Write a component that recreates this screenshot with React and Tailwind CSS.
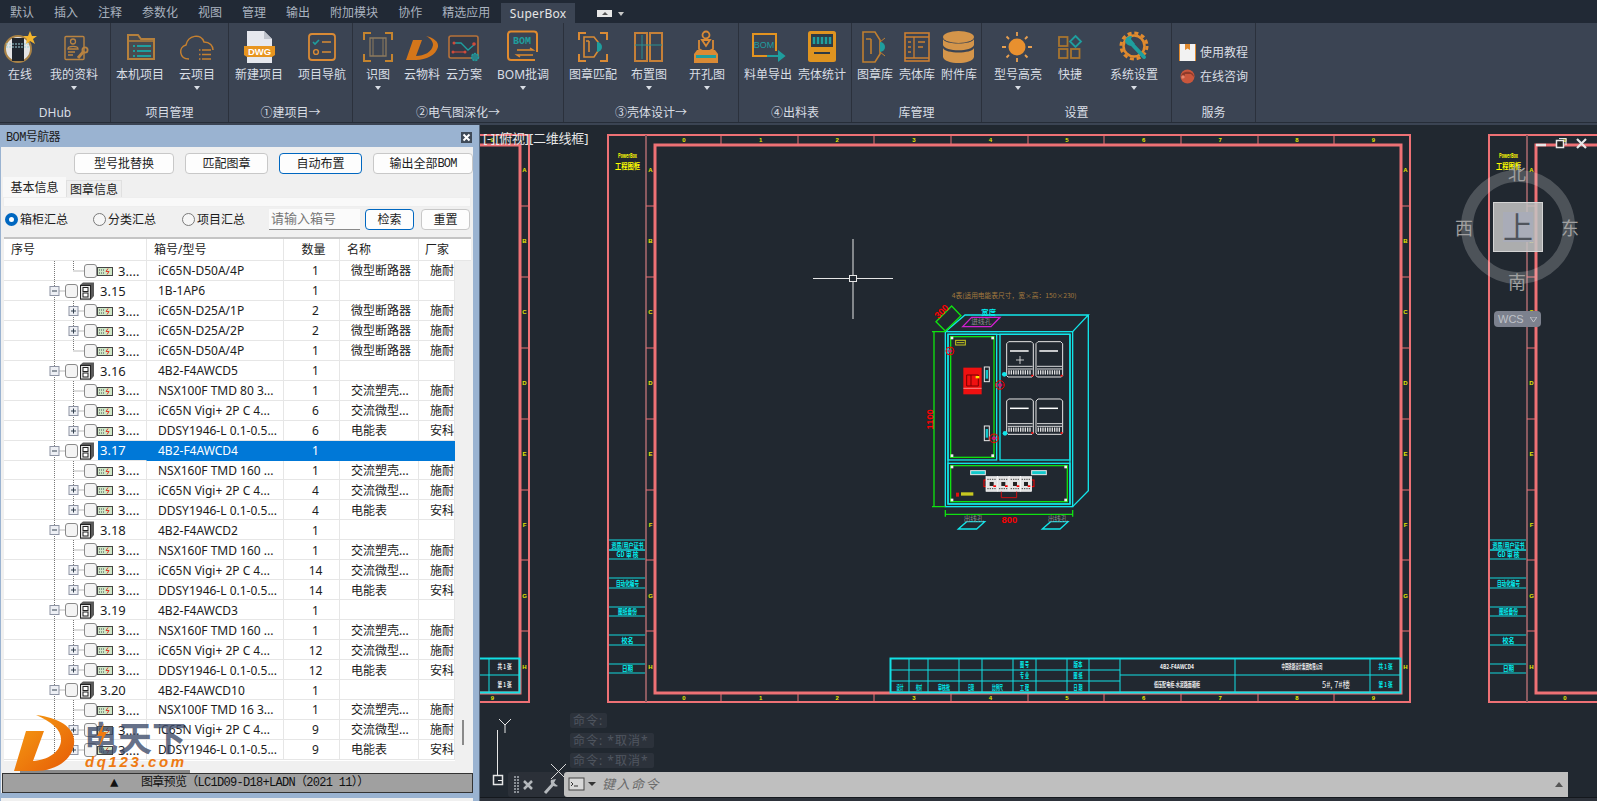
import React from "react";

const O = "#d98a35";
const T = "#1f9e9e";

const Ic = ({ children }) => (
  <svg width="40" height="36" viewBox="0 0 40 36" fill="none" className="block">{children}</svg>
);

const Brackets = ({ c = "#d98a35" }) => (
  <g stroke={c} strokeWidth="2">
    <path d="M13 3H6V10" /><path d="M27 3H34V10" /><path d="M6 24V31H13" /><path d="M34 24V31H27" />
  </g>
);

const icons = {
  online: (
    <Ic>
      <circle cx="18" cy="19" r="13" fill="#e4e4e4" stroke="#a98245" strokeWidth="2" />
      <path d="M12 8H24V31H12Z" fill="#20262e" />
      <path d="M6 14H30M6 17H30" stroke="#9fd0d8" strokeWidth="1" strokeDasharray="2 1" />
      <path d="M30 1L32 6L37 6L33 9L35 14L30 11L26 14L27 9L23 6L28 6Z" fill="#f3b52c" />
    </Ic>
  ),
  profile: (
    <Ic>
      <rect x="11" y="6.5" width="19" height="23" rx="1" stroke="#b98340" strokeWidth="1.4" />
      <circle cx="19" cy="11.5" r="2.5" stroke="#b98340" strokeWidth="1.3" />
      <path d="M14 19C14 15.5 24 15.5 24 19Z" stroke="#b98340" strokeWidth="1.3" />
      <path d="M14 22H21M14 25H19" stroke="#b98340" strokeWidth="1.3" />
      <path d="M24 28L30 21" stroke="#b98340" strokeWidth="3" />
      <circle cx="31" cy="20" r="2.6" stroke="#b98340" strokeWidth="1.8" />
    </Ic>
  ),
  folder: (
    <Ic>
      <path d="M8 29V5H18L21 9H34V29Z" fill="#4a4b4f" stroke="#b5803c" strokeWidth="2" />
      <path d="M8 11H34" stroke="#b5803c" strokeWidth="1.5" />
      <path d="M13 16H31M13 21H31M13 26H31" stroke={T} strokeWidth="2" strokeDasharray="2 2 14 0" />
    </Ic>
  ),
  cloud: (
    <Ic>
      <path d="M12 29C2 29 1 17 9 15C11 5 24 3 27 12C33 12 36 16 36 20" stroke="#c58030" strokeWidth="1.5" />
      <path d="M22 20H34M22 24.5H34M22 29H34" stroke="#c58030" strokeWidth="1.3" strokeDasharray="1.5 1.5 9 0" />
    </Ic>
  ),
  dwg: (
    <Ic>
      <path d="M8 1H25L33 9V33H8Z" fill="#e6e8ee" />
      <path d="M25 1L33 9H25Z" fill="#bfc3cc" />
      <path d="M5 16H36V25L33 27H8L5 25Z" fill="#e8951f" />
      <text x="20.5" y="24.5" textAnchor="middle" fontSize="9.5" fontWeight="700" fill="#fff" fontFamily="Liberation Sans">DWG</text>
    </Ic>
  ),
  nav: (
    <Ic>
      <rect x="7" y="4" width="26" height="26" rx="3" stroke={O} strokeWidth="1.8" />
      <path d="M11 12L13 14L17 10" stroke={T} strokeWidth="1.6" />
      <path d="M20 12H29M20 22H29" stroke={O} strokeWidth="1.6" />
      <circle cx="14" cy="22" r="2.4" stroke={O} strokeWidth="1.4" />
    </Ic>
  ),
  recog: (
    <Ic>
      <Brackets c="#c4842f" />
      <path d="M12 8H28V26H12Z" stroke="#8d7a5e" strokeWidth="1.3" />
      <path d="M15 8V26M25 8V26" stroke="#8d7a5e" strokeWidth="1" />
    </Ic>
  ),
  wuliao: (
    <Ic>
      <path d="M4 30L11 10L20 10L14 26C22 26 30 22 31 15C31 11 28 8 24 6C32 8 37 12 36 17C34 25 24 30 14 30Z" fill="#d4761a" />
    </Ic>
  ),
  scheme: (
    <Ic>
      <rect x="5" y="6" width="29" height="22" rx="2" fill="#333a48" stroke="#b5713a" strokeWidth="1.6" />
      <path d="M9 13H17L24 20L31 14" stroke={T} strokeWidth="1.3" />
      <path d="M9 22H21" stroke="#c64a3a" strokeWidth="1.2" />
      <circle cx="10" cy="13" r="1.5" fill="#d04a3a" /><circle cx="30" cy="14" r="1.8" fill="#d04a3a" />
      <circle cx="9" cy="22" r="1.5" fill="#d04a3a" /><circle cx="21" cy="22" r="1.5" fill="#d04a3a" />
      <circle cx="31" cy="27" r="3.5" fill="#2a7f86" stroke="#1f9e9e" strokeWidth="1.5" strokeDasharray="2 1" />
    </Ic>
  ),
  bom: (
    <Ic>
      <path d="M32 30H8A3 3 0 0 1 5 27V4A3 3 0 0 1 8 1.5H31A3 3 0 0 1 34 4V22" stroke="#e08a2e" strokeWidth="2" />
      <text x="19" y="14" textAnchor="middle" fontSize="10" fontWeight="700" fill={T} fontFamily="Liberation Mono">BOM</text>
      <path d="M14 20H30L27 18M30 25H14L17 27" stroke="#e08a2e" strokeWidth="1.5" />
    </Ic>
  ),
  match: (
    <Ic>
      <Brackets />
      <path d="M11 7H21L25 12V21L21 27H11Z" stroke={O} strokeWidth="1.6" />
      <path d="M16 11V22M16 11H13" stroke={O} strokeWidth="1.6" />
      <path d="M24 12A5 5 0 0 1 24 22Z" fill={T} />
    </Ic>
  ),
  layout: (
    <Ic>
      <rect x="6" y="3" width="12" height="28" stroke="#c58038" strokeWidth="2" />
      <rect x="21" y="3" width="12" height="28" stroke="#c58038" strokeWidth="2" />
      <path d="M6 15H33M13 5V29" stroke="#2a8f90" strokeWidth="1" />
    </Ic>
  ),
  hole: (
    <Ic>
      <circle cx="19" cy="5" r="3.5" stroke={O} strokeWidth="1.8" />
      <path d="M12 10V19L19 23L26 19V10M15 10L19 16L23 10Z" stroke={O} strokeWidth="1.8" />
      <path d="M10 20H28L31 24V33H7V24Z" fill={O} />
      <path d="M9 25H29V28H9Z" fill={T} />
    </Ic>
  ),
  bomout: (
    <Ic>
      <path d="M28 21V4H5V26H21" stroke="#e29320" strokeWidth="2" />
      <text x="16" y="18" textAnchor="middle" fontSize="9" fill={T} fontFamily="Liberation Sans">BOM</text>
      <path d="M19 26H31V22L36 26L31 30V26" fill={T} stroke={T} strokeWidth="2" />
    </Ic>
  ),
  stats: (
    <Ic>
      <rect x="6" y="1" width="28" height="31" rx="2.5" fill="#df9420" />
      <rect x="9" y="4" width="22" height="13" fill="#2e3a44" />
      <path d="M12 7V14M16 7V14M20 7V14M24 7V14M28 7V14" stroke={T} strokeWidth="2.5" />
      <path d="M12 23H28" stroke="#2e3a44" strokeWidth="2" />
    </Ic>
  ),
  stamp: (
    <Ic>
      <path d="M8 2H20L25 10V24L20 32H8Z" stroke="#c07f30" strokeWidth="1.6" />
      <path d="M16 9V24M16 9H11" stroke="#c07f30" strokeWidth="1.6" />
      <path d="M25 12A5 5 0 0 1 25 22Z" fill={T} />
      <path d="M25 12L30 8M25 22L30 26" stroke="#c07f30" strokeWidth="1" />
    </Ic>
  ),
  shell: (
    <Ic>
      <rect x="8" y="3" width="24" height="28" stroke="#cb7f32" strokeWidth="1.6" />
      <path d="M8 7H32M8 28H32M17 7V28" stroke="#cb7f32" strokeWidth="1.3" />
      <path d="M11 12H14M11 17H14M11 22H14M21 12H28M21 17H26" stroke="#cb7f32" strokeWidth="1.5" />
    </Ic>
  ),
  db: (
    <Ic>
      <ellipse cx="19.5" cy="7" rx="15.5" ry="6" fill="#d4954a" />
      <path d="M4 9C6 15 33 15 35 9V15C33 22 6 22 4 15Z" fill="#d4954a" />
      <path d="M4 18C6 24 33 24 35 18V27C33 35 6 35 4 27Z" fill="#d4954a" />
    </Ic>
  ),
  sun: (
    <Ic>
      <circle cx="19" cy="17" r="8.5" fill="#e8902f" />
      <path d="M19 2V6M19 28V32M4 17H8M30 17H34M8.5 6.5L11 9M27 25L29.5 27.5M29.5 6.5L27 9M11 25L8.5 27.5" stroke="#e8a050" strokeWidth="1.8" />
    </Ic>
  ),
  quick: (
    <Ic>
      <rect x="9" y="7" width="8.5" height="9" stroke="#a8752f" strokeWidth="1.8" />
      <rect x="9" y="19" width="8.5" height="9" stroke="#a8752f" strokeWidth="1.8" />
      <rect x="21" y="19" width="8.5" height="9" stroke="#a8752f" strokeWidth="1.8" />
      <path d="M25.5 6L31 11.5L25.5 17L20 11.5Z" stroke={T} strokeWidth="1.8" />
    </Ic>
  ),
  gear: (
    <Ic>
      <circle cx="20" cy="16" r="13" stroke="#e08a2e" strokeWidth="3" strokeDasharray="4 2.8" />
      <circle cx="20" cy="16" r="10.5" stroke="#e08a2e" strokeWidth="2.5" />
      <path d="M15 11L30 27" stroke={T} strokeWidth="4" strokeLinecap="round" />
      <path d="M11 11A6 6 0 0 0 21 14L17 9L18 6A6 6 0 0 0 11 11Z" fill={T} />
    </Ic>
  ),
};

const groups = [
  { w: 111, label: "DHub", items: [["在线", 40, "online"], ["我的资料", 68, "profile", 1]] },
  { w: 118, label: "项目管理", items: [["本机项目", 58, "folder"], ["云项目", 56, "cloud", 1]] },
  { w: 124, label: "①建项目→", items: [["新建项目", 60, "dwg"], "sep", ["项目导航", 60, "nav"]] },
  { w: 211, label: "②电气图深化→", items: [["识图", 50, "recog", 1], ["云物料", 38, "wuliao"], ["云方案", 46, "scheme"], ["BOM批调", 72, "bom", 1]] },
  { w: 175, label: "③壳体设计→", items: [["图章匹配", 58, "match"], ["布置图", 54, "layout", 1], ["开孔图", 62, "hole", 1]] },
  { w: 113, label: "④出料表", items: [["料单导出", 58, "bomout"], ["壳体统计", 50, "stats"]] },
  { w: 130, label: "库管理", items: [["图章库", 46, "stamp"], ["壳体库", 38, "shell"], ["附件库", 46, "db"]] },
  { w: 190, label: "设置", items: [["型号高亮", 72, "sun", 1], ["快捷", 32, "quick"], "sep2", ["系统设置", 74, "gear", 1]] },
];

const tabs = ["默认", "插入", "注释", "参数化", "视图", "管理", "输出", "附加模块", "协作", "精选应用"];

const Ribbon = () => (
  <div className="flex h-[100px] bg-[#3b4453] border-b border-[#262d38] text-[#d9dee5] text-[12px]">
    {groups.map((g) => (
      <div key={g.label} style={{ width: g.w }} className="shrink-0 h-full flex flex-col border-r border-[#2b313c]">
        <div className="h-[80px] flex">
          {g.items.map((it, i) =>
            typeof it === "string" ? (
              <div key={i} className={it === "sep" ? "w-[1px] ml-[1px] mr-[2px] mt-[5px] h-[72px] bg-[#2b313c]" : "w-[1px] ml-[8px] mr-[3px] mt-[5px] h-[72px] bg-[#2b313c]"} />
            ) : (
              <div key={it[0]} style={{ width: it[1] }} className="shrink-0 flex flex-col items-center pt-[7px]">
                {icons[it[2]]}
                <div className="h-[18px] leading-[18px] whitespace-nowrap">{it[0]}</div>
                {it[3] ? <div className="mt-[2px] w-0 h-0 border-x-[3px] border-x-transparent border-t-[4px] border-t-[#d9dee5]" /> : null}
              </div>
            )
          )}
        </div>
        <div className="h-[19px] leading-[19px] text-center whitespace-nowrap">{g.label}</div>
      </div>
    ))}
    <div className="border-r border-[#2b313c] w-[84px] h-full flex flex-col">
      <div className="h-[80px] pt-[21px] pl-[7px] flex flex-col gap-[7px]">
        <div className="flex items-center gap-[4px] h-[17px]">
          <svg width="17" height="17" viewBox="0 0 17 17">
            <rect x="0" y="0" width="17" height="17" fill="#f2f2f2" />
            <path d="M0 0V17M17 0V17" stroke="#e08a2e" strokeWidth="2" />
            <path d="M6 0H11V6L8.500 4.500L6 6Z" fill="#e08a2e" />
          </svg>
          <span className="whitespace-nowrap">使用教程</span>
        </div>
        <div className="flex items-center gap-[4px] h-[17px]">
          <svg width="17" height="17" viewBox="0 0 17 17">
            <circle cx="8.500" cy="8.500" r="7" fill="#c9563c" />
            <path d="M2 9C2 2 15 2 15 9L12 6H6L5 11Z" fill="#8e3a2a" />
            <circle cx="4" cy="9" r="1.800" fill="#e8836a" />
          </svg>
          <span className="whitespace-nowrap">在线咨询</span>
        </div>
      </div>
      <div className="h-[19px] leading-[19px] text-center">服务</div>
    </div>
  </div>
);

/* ---------------- tree table ---------------- */
const N160 = "NSX160F TMD 160 ...";
const V = "iC65N Vigi+ 2P C 4...";
const D = "DDSY1946-L 0.1-0.5...";
const S = "施耐";
const rows = [
  ["c", "3....", "iC65N-D50A/4P", "1", "微型断路器", S, 0, 1],
  ["p", "3.15", "1B-1AP6", "1"],
  ["c", "3....", "iC65N-D25A/1P", "2", "微型断路器", S, 1],
  ["c", "3....", "iC65N-D25A/2P", "2", "微型断路器", S, 1],
  ["c", "3....", "iC65N-D50A/4P", "1", "微型断路器", S, 0, 1],
  ["p", "3.16", "4B2-F4AWCD5", "1"],
  ["c", "3....", "NSX100F TMD 80 3...", "1", "交流塑壳...", S, 0],
  ["c", "3....", V, "6", "交流微型...", S, 1],
  ["c", "3....", D, "6", "电能表", "安科", 1, 1],
  ["p", "3.17", "4B2-F4AWCD4", "1", "", "", 0, 0, 1],
  ["c", "3....", N160, "1", "交流塑壳...", S, 0],
  ["c", "3....", V, "4", "交流微型...", S, 1],
  ["c", "3....", D, "4", "电能表", "安科", 1, 1],
  ["p", "3.18", "4B2-F4AWCD2", "1"],
  ["c", "3....", N160, "1", "交流塑壳...", S, 0],
  ["c", "3....", V, "14", "交流微型...", S, 1],
  ["c", "3....", D, "14", "电能表", "安科", 1, 1],
  ["p", "3.19", "4B2-F4AWCD3", "1"],
  ["c", "3....", N160, "1", "交流塑壳...", S, 0],
  ["c", "3....", V, "12", "交流微型...", S, 1],
  ["c", "3....", D, "12", "电能表", "安科", 1, 1],
  ["p", "3.20", "4B2-F4AWCD10", "1"],
  ["c", "3....", "NSX100F TMD 16 3...", "1", "交流塑壳...", S, 0],
  ["c", "3....", V, "9", "交流微型...", S, 1],
  ["c", "3....", D, "9", "电能表", "安科", 1, 1],
];

const Exp = ({ x, minus }) => (
  <g>
    <rect x={x - 4.5} y="5.500" width="9" height="9" fill="#eef0f5" stroke="#8d93a3" />
    <path d={`M${x - 2.5} 10H${x + 2.5}`} stroke="#33404f" />
    {minus ? null : <path d={`M${x} 7.500V12.500`} stroke="#33404f" />}
  </g>
);

const TreeC = ({ r }) => {
  const dot = { stroke: "#777", strokeDasharray: "1 1" };
  if (r[0] === "p") {
    return (
      <svg width="94" height="20" className="shrink-0 block">
        <path d="M50.500 0V20" {...dot} />
        <path d="M50.500 10H61" {...dot} />
        <Exp x={50.5} minus />
        <rect x="61.500" y="3.500" width="12" height="13" rx="2.500" fill="#f4f4f4" stroke="#8a8a8a" />
        <path d="M76 4L79 1.500H90V15L87 18.500H76Z" fill="#5a5a5a" />
        <rect x="76.500" y="4.500" width="10" height="13.500" fill="#e8e8e8" stroke="#222" />
        <rect x="79" y="6.500" width="5" height="4" fill="#fff" stroke="#222" />
        <rect x="79" y="12" width="5" height="4" fill="#fff" stroke="#222" />
      </svg>
    );
  }
  return (
    <svg width="110" height="20" className="shrink-0 block">
      <path d="M50.500 0V20" {...dot} />
      <path d={r[7] ? "M69.500 0V10" : "M69.500 0V20"} {...dot} />
      <path d="M69.500 10H80" {...dot} />
      {r[6] ? <Exp x={69.5} /> : null}
      <rect x="80.500" y="3.500" width="12" height="13" rx="2.500" fill="#f4f4f4" stroke="#8a8a8a" />
      <rect x="93.500" y="6.500" width="15" height="8" fill="#cfe8c6" stroke="#444" />
      <path d="M95 9H100M95 12H100" stroke="#445" strokeDasharray="1 1" />
      <path d="M104 7.500L102 10.500H105L103 13.500" stroke="#e23b2a" fill="none" />
    </svg>
  );
};

const cols = "grid grid-cols-[143px_137px_56px_79px_36px]";

const Row = ({ r }) => {
  const sel = r[8];
  const cell = `h-full flex items-center pt-[2px] overflow-hidden whitespace-nowrap border-b border-r ${sel ? "bg-[#0078d7] text-white border-[#0078d7]" : "border-[#e6e6e6]"}`;
  return (
    <div className={`${cols} h-[19.96px]`}>
      <div className={`h-full flex border-b border-r overflow-hidden ${sel ? "border-b-[#e6e6e6] border-r-[#0078d7]" : "border-[#e6e6e6]"}`}>
        <TreeC r={r} />
        <div className={`flex-1 flex items-center pt-[2px] whitespace-nowrap h-full text-[13px] ${r[0] === "p" ? "pl-[2px]" : "pl-[4px]"} ${sel ? "bg-[#0078d7] text-white" : ""}`}>
          {r[1]}
        </div>
      </div>
      <div className={`${cell} pl-[11px]`}>{r[2]}</div>
      <div className={`${cell} justify-center pl-[8px]`}>{r[3]}</div>
      <div className={`${cell} pl-[11px]`}>{r[4] || ""}</div>
      <div className={`${cell} pl-[11px]`}>{r[5] || ""}</div>
    </div>
  );
};

const Btn = ({ w, blue, children, cls = "" }) => (
  <div style={{ width: w }} className={`shrink-0 h-[21px] flex items-center justify-center bg-[#fdfdfd] rounded-[4px] border whitespace-nowrap ${blue ? "border-[#0067c0]" : "border-[#c8c8c8]"} ${cls}`}>
    {children}
  </div>
);

const Radio = ({ w, on, children }) => (
  <div style={{ width: w }} className="shrink-0 h-[21px] flex items-center gap-[2px]">
    {on ? (
      <div className="w-[13px] h-[13px] rounded-full border-[4px] border-[#0067c0] bg-white" />
    ) : (
      <div className="w-[13px] h-[13px] rounded-full border border-[#7a7a7a] bg-[#f6f6f6]" />
    )}
    <span className="whitespace-nowrap">{children}</span>
  </div>
);

const Panel = () => (
  <div className="relative w-[480px] h-[676px] shrink-0 bg-[#9ab3d1] pt-[2px] pl-[1px] pr-[6px] border-r border-[#55657a] flex flex-col text-[12px] text-[#1c1c1c]">
    <div className="h-[20px] flex items-center justify-between pl-[5px] pr-[1px] shrink-0">
      <span className="translate-y-[1px] font-['Liberation_Mono','Noto_Sans_CJK_SC',monospace] tracking-[-0.6px]">BOM号航器</span>
      <svg width="11" height="11" viewBox="0 0 11 11"><rect width="11" height="11" fill="#3f4a58" /><path d="M2.500 2.500L8.500 8.500M8.500 2.500L2.500 8.500" stroke="#fff" strokeWidth="2" /></svg>
    </div>
    <div className="flex-1 bg-[#f0f0f0] flex flex-col min-h-0">
      <div className="h-[30px] pt-[6px] pl-[73px] flex gap-[11px] shrink-0">
        <Btn w={100}>型号批替换</Btn>
        <Btn w={83}>匹配图章</Btn>
        <Btn w={83} blue>自动布置</Btn>
        <Btn w={100}>输出全部<span className="font-['Liberation_Mono',monospace] tracking-[-0.8px]">BOM</span></Btn>
      </div>
      <div className="h-[20px] flex items-end pl-[2px] shrink-0">
        <div className="h-[20px] w-[63px] pt-[1px] flex items-center justify-center bg-[#f8f8f8]">基本信息</div>
        <div className="h-[17px] w-[56px] pt-[1px] flex items-center justify-center bg-[#eeeeee] border border-b-0 border-[#e0e0e0]">图章信息</div>
      </div>
      <div className="h-[10px] mx-[2px] mr-[2px] bg-[#f9f9f9] border border-[#eeeeee] shrink-0" />
      <div className="h-[30px] pl-[4px] pt-[2px] flex items-start shrink-0">
        <Radio w={88} on>箱柜汇总</Radio>
        <Radio w={89}>分类汇总</Radio>
        <Radio w={87}>项目汇总</Radio>
        <div className="w-[91px] h-[21px] bg-[#fbfbfb] border-b border-[#8a8a8a] text-[13px] text-[#777] pl-[2px] leading-[18px] whitespace-nowrap">请输入箱号</div>
        <Btn w={49} blue cls="ml-[5px]">检索</Btn>
        <Btn w={49} cls="ml-[7px]">重置</Btn>
      </div>
      <div className="ml-[3px] w-[467px] h-[536px] shrink-0 border-t-2 border-[#c4c4c4] bg-white relative">
        <div className="grid grid-cols-[143px_137px_56px_79px_52px] h-[22px] border-b border-[#e6e6e6]">
          <div className="pl-[7px] flex items-center border-r border-[#e6e6e6]">序号</div>
          <div className="pl-[7px] flex items-center border-r border-[#e6e6e6]">箱号/型号</div>
          <div className="flex items-center justify-center pl-[4px] border-r border-[#e6e6e6]">数量</div>
          <div className="pl-[7px] flex items-center border-r border-[#e6e6e6]">名称</div>
          <div className="pl-[6px] flex items-center">厂家</div>
        </div>
        <div className="flex h-[500px]">
          <div className="w-[451px] shrink-0">
            {rows.map((r, i) => <Row key={i} r={r} />)}
          </div>
          <div className="flex-1 bg-[#f0f0f0] relative">
            <div className="absolute left-[7px] top-[459px] w-[2px] h-[25px] bg-[#8a8a8a]" />
          </div>
        </div>
        <div className="h-[12px] bg-[#f0f0f0] relative">
          <div className="absolute left-[16px] top-[9px] w-[170px] h-[3px] bg-[#8a8a8a]" />
        </div>
      </div>
      <div className="ml-[1px] w-[471px] h-[20px] shrink-0 bg-[#a0a0a0] border border-[#333] flex items-center font-['Liberation_Mono','Noto_Sans_CJK_SC',monospace] text-[#111] whitespace-nowrap">
        <span className="ml-[107px] w-[31px] text-[14px]">▲</span>
        <span className="tracking-[-0.7px]">图章预览（LC1D09-D18+LADN（2021 11））</span>
      </div>
      <div className="h-[5px] bg-[#9ab3d1] shrink-0" />
    </div>
    {/* site watermark */}
    <div className="absolute left-0 top-[587px] w-[200px] h-[75px]">
      <svg width="200" height="75" viewBox="0 712 200 75" className="absolute left-0 top-0">
        <defs>
          <linearGradient id="wm" x1="0" y1="0" x2="1" y2="1">
            <stop offset="0" stopColor="#f6a014" />
            <stop offset="1" stopColor="#e65a06" />
          </linearGradient>
        </defs>
        <path d="M14 771L26 731H44L33 761C48 760 60 752 61 741C62 730 52 722 36 715C60 718 76 728 74 744C72 760 56 771 35 771Z" fill="url(#wm)" />
      </svg>
      <div className="absolute left-[84px] top-[6px] text-[34px] leading-[38px] font-bold text-[#3c4a68]/80 whitespace-nowrap font-['Noto_Sans_CJK_SC',sans-serif]">电天下</div>
      <svg width="14" height="24" viewBox="0 0 14 24" className="absolute left-[95px] top-[11px]"><path d="M9 0L2 13H7L4 24L12 9H7Z" fill="#f07a10" /></svg>
      <div className="absolute left-[85px] top-[41px] text-[15px] leading-[17px] font-bold italic tracking-[2.6px] text-[#ee7a12] whitespace-nowrap font-['Liberation_Sans',sans-serif]">dq123.com</div>
    </div>
  </div>
);

/* ---------------- CAD drawing ---------------- */
const PK = "#ee7175";
const sheetTicksX = [721, 798, 874, 951, 1028, 1104, 1181, 1258, 1334];
const sheetTicksY = [206, 277, 348, 419, 490, 560, 631];
const letters = ["A", "B", "C", "D", "E", "F", "G", "H"];
const inView = (x) => x > 484 && x < 1592;

const Sheet = ({ dx }) => (
  <g transform={`translate(${dx} 0)`}>
    <rect x="608" y="135" width="802" height="567" stroke={PK} strokeWidth="2" fill="none" />
    <path d="M646 135V702" stroke="#8b5a5f" strokeWidth="2" />
    <rect x="655" y="145" width="746" height="548" stroke={PK} strokeWidth="3" fill="none" />
    {sheetTicksX.map((x) => <path key={x} d={`M${x} 135V144M${x} 693V702`} stroke={PK} strokeWidth="1" />)}
    {sheetTicksY.map((y) => <path key={y} d={`M646 ${y}H655M1401 ${y}H1410`} stroke={PK} strokeWidth="1" />)}
    {letters.map((l, i) => (
      <g key={l} fontSize="6" fill="#e6e600" fontWeight="700" fontFamily="Liberation Sans" textAnchor="middle">
        {inView(650.5 + dx) ? <text x="650.5" y={172 + i * 71}>{l}</text> : null}
        {inView(1405.5 + dx) ? <text x="1405.5" y={172 + i * 71}>{l}</text> : null}
      </g>
    ))}
    {[0, 1, 2, 3, 4, 5, 6, 7, 8, 9].map((n) =>
      inView(684 + n * 76.6 + dx) ? (
        <g key={n} fontSize="6" fill="#e6e600" fontWeight="700" fontFamily="Liberation Sans" textAnchor="middle">
          <text x={684 + n * 76.6} y="141.500">{n}</text>
          <text x={684 + n * 76.6} y="700">{n}</text>
        </g>
      ) : null
    )}
  </g>
);

const Fit = ({ x, y, w, s = 6.5, c = "#00f0f0", b = true, children }) => (
  <text x={x} y={y} textAnchor="middle" textLength={w} lengthAdjust="spacingAndGlyphs" fontSize={s} fontWeight={b ? 700 : 400} fill={c} fontFamily="Noto Sans CJK SC">{children}</text>
);

const StripRow = ({ y1, y2, w, t }) => (
  <>
    <path d={`M609 ${y1}H645M609 ${y2}H645`} stroke="#12d8dc" strokeWidth="1" />
    <Fit x={627.5} y={(y1 + y2) / 2 + 2.5} w={w} s={7}>{t}</Fit>
  </>
);

const LeftStrip = ({ dx }) => (
  <g transform={`translate(${dx} 0)`}>
    <Fit x={627.5} y={158} w={19} s={6} c="#ffff00">PowerBox</Fit>
    <Fit x={627.5} y={169} w={25} s={7.5} c="#ffff00">工程图框</Fit>
    <StripRow y1={540} y2={550} w={32} t="资质/用户证书" />
    <StripRow y1={550} y2={559} w={22} t="GD 审 核" />
    <StripRow y1={578} y2={588} w={23} t="自动化编号" />
    <StripRow y1={607} y2={616} w={19} t="图纸备份" />
    <StripRow y1={635} y2={645} w={12} t="校名" />
    <StripRow y1={664} y2={673} w={11} t="日期" />
  </g>
);

const C = "#12e0e4";
const TitleBlock = () => {
  const vs = [909, 928, 959, 982, 1013, 1036, 1067, 1089];
  const W = "#f0f0f0";
  return (
    <g>
      <rect x="890.500" y="658.500" width="510" height="34" stroke={C} strokeWidth="2" fill="none" />
      {vs.map((x) => <path key={x} d={`M${x} 658V693`} stroke={C} strokeWidth="1" />)}
      <path d="M1120 658V693M1235 658V693M1370 658V693M890 670H1120M890 681H1120M1120 675H1401" stroke={C} strokeWidth="1" />
      <Fit x={900} y={689.500} w={7}>设计</Fit>
      <Fit x={919} y={689.500} w={6}>校对</Fit>
      <Fit x={944} y={689.500} w={12}>审核批</Fit>
      <Fit x={971} y={689.500} w={6}>日期</Fit>
      <Fit x={997.500} y={689.500} w={11}>比例尺</Fit>
      <Fit x={1024.500} y={666.500} w={9}>图 号</Fit>
      <Fit x={1024.500} y={678} w={9}>专 业</Fit>
      <Fit x={1024.500} y={689.500} w={9}>工 程</Fit>
      <Fit x={1078} y={666.500} w={9}>版本</Fit>
      <Fit x={1078} y={678} w={9}>图 纸</Fit>
      <Fit x={1078} y={689.500} w={9}>日 期</Fit>
      <Fit x={1177} y={669} w={34} c={W}>4B2-F4AWCD4</Fit>
      <Fit x={1177} y={687} w={46} c={W}>低压配电柜-水泥路面箱柜</Fit>
      <Fit x={1302} y={669} w={41} c={W}>中国铁路设计集团有限公司</Fit>
      <Fit x={1336} y={688} w={28} s={9} c={W} b={false}>5#, 7#楼</Fit>
      <Fit x={1385.500} y={669} w={14}>共 1 张</Fit>
      <Fit x={1385.500} y={687} w={14}>第 1 张</Fit>
    </g>
  );
};

const Meter = ({ x, y }) => (
  <g fill="none">
    <path d={`M${x + 6} ${y}H${x + 74}L${x + 80} ${y + 6}V${y + 102}L${x + 76} ${y + 106}H${x + 4}L${x} ${y + 102}V${y + 6}Z`} stroke="#e8e8e8" strokeWidth="3" />
    <path d={`M${x + 10} ${y + 28}H${x + 66}`} stroke="#fff" strokeWidth="4.500" />
    <path d={`M${x + 3} ${y + 74}H${x + 78}M${x + 3} ${y + 82}H${x + 78}`} stroke="#fff" strokeWidth="2.500" />
    <path d={`M${x + 5} ${y + 92}H${x + 75}`} stroke="#e0e0e0" strokeWidth="13" strokeDasharray="4 3" />
    <path d={`M${x + 74} ${y + 102}H${x + 80}`} stroke="#f00" strokeWidth="5" />
  </g>
);

const RedMark = ({ x, y, r }) => (
  <g>
    <circle cx={x} cy={y} r={r} fill="none" stroke="#f00" strokeWidth="3" />
    <circle cx={x} cy={y} r={r * 0.45} fill="#b030c0" />
    <path d={`M${x - r} ${y}H${x + r}M${x} ${y - r}V${y + r}`} stroke="#f00" strokeWidth="1.500" />
  </g>
);

const Cabinet = () => {
  const dots = [[126, 174], [248, 174], [126, 527], [248, 527], [126, 561], [467, 561], [126, 660], [467, 660]];
  return (
    <g transform="translate(910 280) scale(0.3333)">
      <text x="125" y="55" textLength="375" lengthAdjust="spacingAndGlyphs" fontSize="19" fill="#a47a3e" fontFamily="Noto Sans CJK SC">4表(适用电能表尺寸，宽×高：150×230)</text>
      <g stroke="#12e6ea" strokeWidth="4" fill="none">
        <path d="M106 155L165 105H535L488 155M535 105V632L488 680" />
        <rect x="106" y="155" width="382" height="525" />
        <rect x="114" y="163" width="366" height="509" />
        <rect x="114" y="163" width="146" height="377" />
        <rect x="270" y="163" width="210" height="377" />
        <rect x="114" y="550" width="366" height="122" />
        <path d="M145 747L170 725H224L200 747ZM397 747L422 725H474L450 747Z" />
      </g>
      <g stroke="#10e010" strokeWidth="4" fill="none">
        <rect x="122" y="170" width="130" height="362" />
        <rect x="122" y="557" width="350" height="108" />
        <path d="M78 125L125 78L153 107L106 153Z" />
        <path d="M72 155V680M66 155H106M66 680H106M106 703H488M106 690V710M488 690V710" />
      </g>
      {dots.map(([x, y]) => <rect key={`${x}${y}`} x={x - 4} y={y - 4} width="8" height="8" fill="#f0f0f0" />)}
      <path d="M158 140L185 112H270L243 140Z" fill="none" stroke="#d020d0" strokeWidth="4" />
      <text x="214" y="132" textAnchor="middle" fontSize="20" fill="#8c8c8c" fontFamily="Noto Sans CJK SC">进线孔</text>
      <text x="236" y="105" textAnchor="middle" fontSize="22" fontWeight="700" fill="#00f0f0" fontFamily="Noto Sans CJK SC">宽度</text>
      <text x="95" y="104" textAnchor="middle" fontSize="28" fontWeight="700" fill="#f00" fontFamily="Liberation Sans" transform="rotate(-45 95 95)">300</text>
      <text x="60" y="428" textAnchor="middle" fontSize="28" fontWeight="700" fill="#f00" fontFamily="Liberation Sans" transform="rotate(-90 60 418)">1100</text>
      <text x="298" y="728" textAnchor="middle" fontSize="28" fontWeight="700" fill="#f00" fontFamily="Liberation Sans">800</text>
      <text x="191" y="722" textAnchor="middle" fontSize="20" fill="#8c8c8c" fontFamily="Noto Sans CJK SC">出线孔</text>
      <text x="443" y="722" textAnchor="middle" fontSize="20" fill="#8c8c8c" fontFamily="Noto Sans CJK SC">出线孔</text>
      <Meter x={290} y={185} /><Meter x={378} y={185} /><Meter x={290} y={357} /><Meter x={378} y={357} />
      <path d="M318 240H342M330 228V252" stroke="#e8e8e8" strokeWidth="2.500" />
      <circle cx="283" cy="283" r="7" fill="#12e6ea" /><circle cx="285" cy="460" r="7" fill="#12e6ea" />
      <rect x="160" y="263" width="55" height="80" fill="#f01010" />
      <path d="M170 285H205V318H170ZM183 285V318" fill="none" stroke="#700" strokeWidth="3" />
      <rect x="197" y="288" width="11" height="7" fill="#ffe000" />
      <path d="M160 325H215" stroke="#fff" strokeWidth="1.500" />
      <rect x="223" y="261" width="15" height="44" fill="none" stroke="#e8e8e8" strokeWidth="3" />
      <rect x="227" y="270" width="7" height="26" fill="#12c8cc" />
      <rect x="223" y="438" width="15" height="44" fill="none" stroke="#e8e8e8" strokeWidth="3" />
      <rect x="227" y="447" width="7" height="26" fill="#12c8cc" />
      <RedMark x={270} y={315} r={13} /><RedMark x={120} y={213} r={12} /><RedMark x={252} y={475} r={13} />
      <rect x="137" y="181" width="29" height="14" fill="none" stroke="#c8c820" strokeWidth="3" />
      <path d="M140 188H163" stroke="#c8c820" strokeWidth="3" />
      <rect x="182" y="572" width="44" height="12" fill="#12c8cc" stroke="#e8e8e8" strokeWidth="3" />
      <rect x="365" y="572" width="44" height="12" fill="#12c8cc" stroke="#e8e8e8" strokeWidth="3" />
      <rect x="222" y="600" width="150" height="20" fill="none" stroke="#f00" strokeWidth="3" />
      {[228, 263, 298, 331].map((x) => (
        <g key={x}>
          <rect x={x} y="590" width="34" height="44" fill="#e4e4e4" stroke="#fff" strokeWidth="2" />
          <path d={`M${x + 4} 598H${x + 30}M${x + 4} 626H${x + 30}`} stroke="#444" strokeWidth="3" strokeDasharray="4 3" />
          <rect x={x + 11} y="606" width="12" height="12" fill="#222" />
          <rect x={x + 22} y="616" width="8" height="5" fill="#f00" />
        </g>
      ))}
      <path d="M274 635V653H320V635" fill="none" stroke="#d01010" strokeWidth="3" />
      <rect x="153" y="637" width="37" height="10" fill="#c8c820" />
      <rect x="138" y="638" width="9" height="12" fill="#e01010" />
    </g>
  );
};

const Canvas = () => (
  <div className="relative flex-1 h-[676px] bg-[#212830] overflow-hidden">
    <svg width="1117" height="676" viewBox="480 125 1117 676" className="absolute left-0 top-0 block">
      <Sheet dx={-881} /><Sheet dx={0} /><Sheet dx={881} />
      <LeftStrip dx={0} /><LeftStrip dx={881} />
      <g>
        <path d="M489 658V693M480 675H519" stroke={C} strokeWidth="1" />
        <rect x="470" y="658.500" width="49.500" height="34" stroke={C} strokeWidth="2" fill="none" />
        <Fit x={504.5} y={669} w={14} c="#f0f0f0">共 1 张</Fit>
        <Fit x={504.5} y={687} w={14} c="#f0f0f0">第 1 张</Fit>
      </g>
      <TitleBlock />
      <Cabinet />
      <g stroke="#e6e6e6" strokeWidth="1" fill="none">
        <path d="M853 239V275M853 282V319M813 278.500H849M856 278.500H893" />
        <rect x="849.500" y="275.500" width="7" height="6" />
      </g>
      <g stroke="#e6e6e6" fill="none">
        <path d="M505 725V733M505 725L499 719M505 725L511 719" />
        <path d="M497.500 730V775" />
        <rect x="493.500" y="775.500" width="9" height="9" strokeWidth="1.500" />
        <path d="M498 780.500H503" />
      </g>
    </svg>
    <div className="absolute left-[3px] top-[4px] text-[13px] leading-[18px] text-[#e8e8e8] whitespace-nowrap tracking-[-0.2px]">[-][俯视][二维线框]</div>
    {/* window buttons */}
    <div className="absolute left-[1056px] top-[12px] flex items-center gap-[9px]">
      <svg width="54" height="13" viewBox="0 0 54 13">
        <path d="M0 8H10" stroke="#e8e8e8" strokeWidth="2.500" />
        <rect x="20.500" y="3.500" width="7" height="7" fill="#222" stroke="#e8e8e8" strokeWidth="1.500" />
        <path d="M23 1.500H30V8" stroke="#e8e8e8" strokeWidth="1.200" fill="none" />
        <path d="M41 2L50 11M50 2L41 11" stroke="#e8e8e8" strokeWidth="2.200" />
      </svg>
    </div>
    {/* view cube */}
    <div className="absolute left-[981px] top-[45px] w-[114px] h-[114px] rounded-full border-[12px] border-white/20" />
    <div className="absolute left-[1013px] top-[77px] w-[50px] h-[50px] bg-[#c4c4c4]/85 border border-[#d4d4d4] flex items-center justify-center">
      <div className="w-[30px] h-[30px] bg-[#a9acb8] flex items-center justify-center text-[30px] leading-[30px] text-[#50545c]">上</div>
    </div>
    <div className="absolute left-[1028px] top-[36px] text-[18px] leading-[24px] text-[#a0a0a0]">北</div>
    <div className="absolute left-[1028px] top-[145px] text-[18px] leading-[24px] text-[#a0a0a0]">南</div>
    <div className="absolute left-[975px] top-[91px] text-[18px] leading-[24px] text-[#a0a0a0]">西</div>
    <div className="absolute left-[1081px] top-[91px] text-[18px] leading-[24px] text-[#a0a0a0]">东</div>
    <div className="absolute left-[1014px] top-[186px] w-[47px] h-[16px] rounded-[4px] bg-[#7c818e] flex items-center pl-[4px] text-[11px] text-[#bfc2c8] font-['Liberation_Sans',sans-serif]">
      WCS
      <svg width="7" height="5" viewBox="0 0 7 5" className="ml-[6px]"><path d="M0 0H7L3.500 5Z" fill="none" stroke="#bfc2c8" /></svg>
    </div>
    {/* command history */}
    <div className="absolute left-[90px] top-[588px] w-[37px] h-[15px] rounded-[2px] bg-[#2c323b] text-[12px] leading-[15px] text-[#505660] pl-[3px] tracking-[1px] whitespace-nowrap">命令:</div>
    <div className="absolute left-[90px] top-[608px] w-[84px] h-[15px] rounded-[2px] bg-[#2c323b] text-[12px] leading-[15px] text-[#505660] pl-[3px] tracking-[1px] whitespace-nowrap">命令: *取消*</div>
    <div className="absolute left-[90px] top-[628px] w-[84px] h-[15px] rounded-[2px] bg-[#2c323b] text-[12px] leading-[15px] text-[#505660] pl-[3px] tracking-[1px] whitespace-nowrap">命令: *取消*</div>
    {/* command line */}
    <div className="absolute left-[28px] top-[647px] w-[56px] h-[25px] rounded-l-[3px] bg-[#2b3038] flex items-center">
      <svg width="56" height="25" viewBox="0 0 56 25">
        <path d="M7 4V22M10 4V22" stroke="#8a8f96" strokeWidth="2" strokeDasharray="2 1" />
        <path d="M16 9L24 17M24 9L16 17" stroke="#b4b8bc" strokeWidth="2.500" />
        <path d="M37 21L46 11" stroke="#b4b8bc" strokeWidth="3" />
        <path d="M43 8A5 5 0 0 0 50 14L46 11L48 7Z" fill="#b4b8bc" />
      </svg>
    </div>
    <svg width="20" height="20" viewBox="0 0 20 20" className="absolute left-[69px] top-[637px]"><path d="M2 2L17 17M17 2L2 17" stroke="#d8d8d8" /></svg>
    <div className="absolute left-[84px] top-[647px] w-[1004px] h-[25px] bg-[#bfbfbf] rounded-l-[3px] flex items-center">
      <svg width="36" height="16" viewBox="0 0 36 16" className="ml-[4px]">
        <rect x="1" y="1" width="15" height="12" fill="#d8d8d8" stroke="#444" />
        <path d="M3 5L5 7L3 9M6 9H10" stroke="#333" fill="none" />
        <path d="M20 5H28L24 9Z" fill="#333" />
      </svg>
      <span className="ml-[-2px] text-[13px] italic text-[#6a6a6a] tracking-[1.500px] whitespace-nowrap">键入命令</span>
      <svg width="8" height="5" viewBox="0 0 8 5" className="ml-auto mr-[5px]"><path d="M0 5H8L4 0Z" fill="#555" /></svg>
    </div>
    <div className="absolute left-[0px] top-[672px] w-full h-[4px] bg-[#2d323a] border-t border-[#14181d]" />
  </div>
);

export default function App() {
  return (
    <div className="w-[1597px] h-[801px] overflow-hidden bg-[#3b4453] font-['Noto_Sans','Noto_Sans_CJK_SC',sans-serif]">
      <div className="h-[23px] bg-[#212935] flex text-[12px] text-[#a9b2bf] leading-[26px]">
        {tabs.map((t) => <div key={t} className="px-[10px] whitespace-nowrap">{t}</div>)}
        <div className="ml-[1px] mt-[3px] h-[20px] w-[74px] leading-[21px] bg-[#3b4453] text-[#e6e6e6] text-center tracking-[0.3px]">SuperBox</div>
        <div className="ml-[22px] mt-[10px] w-[15px] h-[7px] bg-[#e8e8e8] flex items-center justify-center">
          <div className="w-0 h-0 border-x-[3px] border-x-transparent border-b-[3px] border-b-[#555]" />
        </div>
        <div className="ml-[6px] mt-[12px] w-0 h-0 border-x-[3px] border-x-transparent border-t-[4px] border-t-[#c8c8c8]" />
      </div>
      <Ribbon />
      <div className="h-[2px] bg-[#3b4453]" />
      <div className="flex h-[676px]">
        <Panel />
        <Canvas />
      </div>
    </div>
  );
}
